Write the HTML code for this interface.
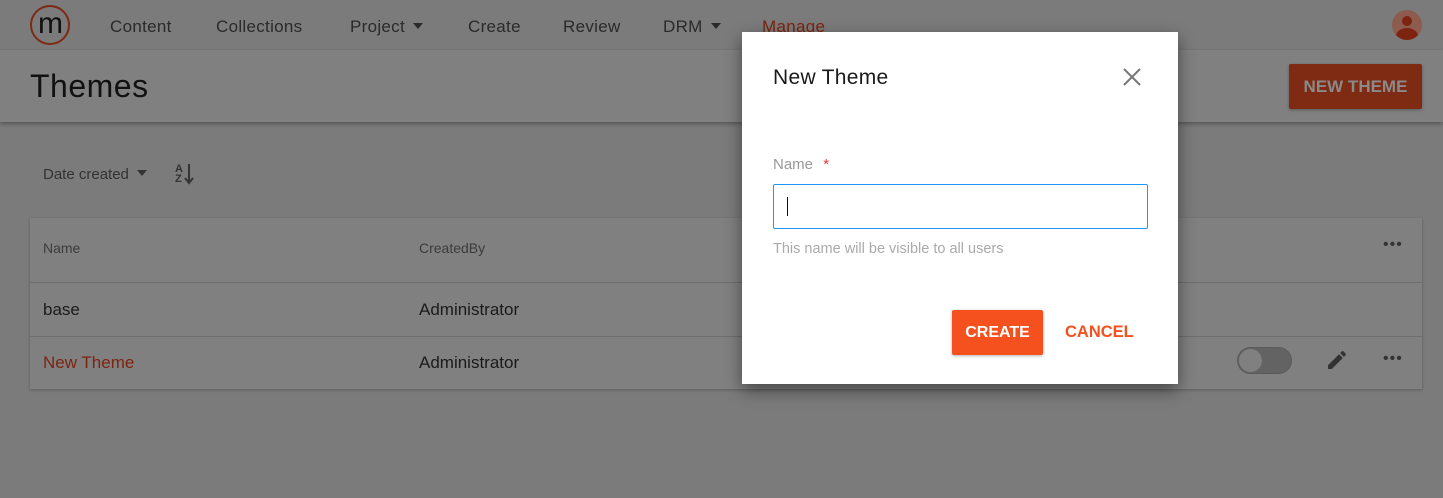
<!DOCTYPE html>
<html><head><style>
*{box-sizing:border-box;margin:0;padding:0}
body{width:1443px;height:498px;background:#7b7b7b;font-family:"Liberation Sans",sans-serif;position:relative;overflow:hidden;color:#262626}
.abs{position:absolute;white-space:nowrap}
.nav{font-size:17px;color:#2a2a2a;top:17px;letter-spacing:.3px}
.caret{display:inline-block;border-left:5px solid transparent;border-right:5px solid transparent;border-top:6px solid #2a2a2a;margin-left:8px;vertical-align:3px}
</style></head><body>
<div class="abs" style="left:0;top:0;width:1443px;height:50px;background:#7b7b7b"></div>
<div class="abs" style="left:0;top:50px;width:1443px;height:72px;background:#808080;box-shadow:0 2px 4px rgba(0,0,0,.3)"></div>
<div class="abs" style="left:30px;top:5px;width:40px;height:40px;border:2px solid #7d2a14;border-radius:50%;font-size:30px;text-align:center;line-height:34px;color:#111;font-weight:300;letter-spacing:-1px">m</div>
<div class="abs nav" style="left:110px">Content</div>
<div class="abs nav" style="left:216px">Collections</div>
<div class="abs nav" style="left:350px">Project<span class="caret"></span></div>
<div class="abs nav" style="left:468px">Create</div>
<div class="abs nav" style="left:563px">Review</div>
<div class="abs nav" style="left:663px">DRM<span class="caret"></span></div>
<div class="abs nav" style="left:762px;color:#7d2410">Manage</div>
<div class="abs" style="left:1392px;top:10px;width:30px;height:30px;border-radius:50%;background:#8d5c4e;overflow:hidden">
 <div class="abs" style="left:10px;top:6px;width:10px;height:10px;border-radius:50%;background:#7d2410"></div>
 <div class="abs" style="left:4px;top:18px;width:22px;height:16px;border-radius:50%;background:#7d2410"></div></div>
<div class="abs" style="left:30px;top:68px;font-size:32px;color:#111;letter-spacing:.5px">Themes</div>
<div class="abs" style="left:1289px;top:64px;width:133px;height:45px;background:#7f2a12;border-radius:2px;color:#8a8a8a;font-size:17px;font-weight:bold;text-align:center;line-height:45px;box-shadow:0 1px 3px rgba(0,0,0,.3)">NEW THEME</div>
<div class="abs" style="left:43px;top:166px;font-size:15px;color:#333">Date created<span class="caret" style="border-top-color:#333"></span></div>
<div class="abs" style="left:175px;top:164px;font-size:11px;font-weight:bold;line-height:10px;color:#333">A<br>Z</div>
<svg class="abs" style="left:184px;top:163px" width="10" height="22" viewBox="0 0 10 22"><path d="M5 1V19M1 15L5 20L9 15" stroke="#333" stroke-width="2" fill="none"/></svg>
<div class="abs" style="left:30px;top:218px;width:1392px;height:171px;background:#808080;box-shadow:0 1px 3px rgba(0,0,0,.25)">
 <div class="abs" style="left:13px;top:22px;font-size:14px;color:#3c3c3c">Name</div>
 <div class="abs" style="left:389px;top:22px;font-size:14px;color:#3c3c3c">CreatedBy</div>
 <div class="abs" style="left:1353px;top:18px;font-size:16px;color:#333;letter-spacing:1px">•••</div>
 <div class="abs" style="left:0;top:64px;width:1392px;height:1px;background:#6e6e6e"></div>
 <div class="abs" style="left:13px;top:82px;font-size:17px;color:#1a1a1a">base</div>
 <div class="abs" style="left:389px;top:82px;font-size:17px;color:#1a1a1a">Administrator</div>
 <div class="abs" style="left:0;top:118px;width:1392px;height:1px;background:#6e6e6e"></div>
 <div class="abs" style="left:13px;top:135px;font-size:17px;color:#7d2410">New Theme</div>
 <div class="abs" style="left:389px;top:135px;font-size:17px;color:#1a1a1a">Administrator</div>
 <div class="abs" style="left:1207px;top:129px;width:55px;height:27px;border-radius:14px;background:#636363;border:1px solid #5a5a5a"></div>
 <div class="abs" style="left:1209px;top:131px;width:23px;height:23px;border-radius:50%;background:#808080"></div>
 <svg class="abs" style="left:1295px;top:130px" width="24" height="24" viewBox="0 0 24 24"><path d="M3 17.25V21h3.75L17.81 9.94l-3.75-3.750L3 17.250zM20.71 7.04a1 1 0 000-1.41l-2.34-2.34a1 1 0 00-1.41 0l-1.83 1.83 3.75 3.75 1.83-1.83z" fill="#333"/></svg>
 <div class="abs" style="left:1353px;top:132px;font-size:16px;color:#333;letter-spacing:1px">•••</div>
</div>
<div class="abs" style="left:742px;top:32px;width:436px;height:352px;background:#fff;box-shadow:0 6px 16px rgba(0,0,0,.45)">
 <div class="abs" style="left:31px;top:34px;font-size:21px;color:#1a1a1a;letter-spacing:.3px">New Theme</div>
 <svg class="abs" style="left:381px;top:36px" width="18" height="18" viewBox="0 0 18 18"><path d="M1 1L17 17M17 1L1 17" stroke="#777" stroke-width="2"/></svg>
 <div class="abs" style="left:31px;top:124px;font-size:15px;color:#999">Name <span style="color:#e53935;margin-left:6px">*</span></div>
 <div class="abs" style="left:31px;top:152px;width:375px;height:45px;border:1px solid #2196f3;border-radius:2px"></div>
 <div class="abs" style="left:45px;top:165px;width:1px;height:19px;background:#111"></div>
 <div class="abs" style="left:31px;top:209px;font-size:14.5px;color:#aaa">This name will be visible to all users</div>
 <div class="abs" style="left:210px;top:278px;width:91px;height:45px;background:#f4511e;border-radius:2px;color:#fff;font-weight:bold;font-size:16px;text-align:center;line-height:45px;box-shadow:0 1px 3px rgba(0,0,0,.3)">CREATE</div>
 <div class="abs" style="left:323px;top:291px;font-size:16.5px;font-weight:bold;color:#f4511e">CANCEL</div>
</div>
</body></html>
